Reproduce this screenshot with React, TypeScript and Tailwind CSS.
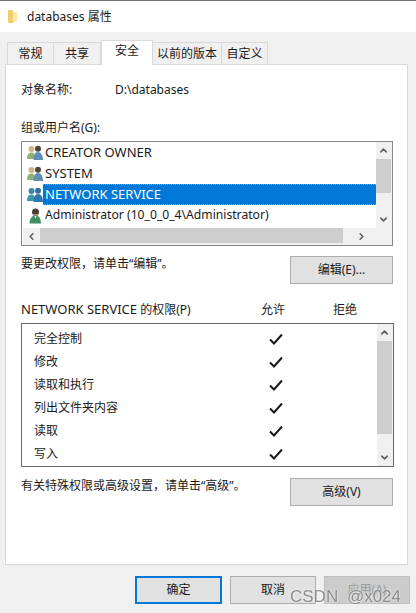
import { ChevronUp, ChevronDown, ChevronLeft, ChevronRight } from 'lucide-react';

const font = { fontFamily: '"Noto Sans", "Noto Sans CJK SC", sans-serif' };

function FolderIcon() {
  return (
    <svg width="16" height="16" viewBox="0 0 16 16">
      <path d="M1 1h4l1 1v12H2l-1-1z" fill="#f3cd6a" />
      <path d="M6 3h4v9l-4 2z" fill="#fbe7a6" />
    </svg>
  );
}

function UsersIcon({ tone }: { tone: 'group' | 'network' }) {
  const net = tone === 'network';
  return (
    <svg width="16" height="16" viewBox="0 0 16 16">
      <circle cx="4.500" cy="4" r="3" fill={net ? '#3f86a8' : '#cdb78a'} />
      <path d="M0 14c0-4 1.500-6.500 4.500-6.500S8 10 8 14z" fill={net ? '#3a9aa0' : '#8fb070'} />
      <circle cx="11" cy="3.800" r="3" fill={net ? '#2f6f9f' : '#4f4438'} />
      <path d="M6.500 15c0-5 1.500-8 4.500-8s5 3 5 8z" fill={net ? '#2f78ad' : '#5f8fb5'} />
    </svg>
  );
}

function UserIcon() {
  return (
    <svg width="16" height="16" viewBox="0 0 16 16">
      <circle cx="8.500" cy="4" r="3.500" fill="#4a4038" />
      <path d="M6 6h5v2H6z" fill="#b08a6a" />
      <path d="M2.500 15.500c0-5 2.500-8 6-8s5.500 3 5.500 8z" fill="#3f8f63" />
      <path d="M7.500 8h2l-1 3z" fill="#e6f0e6" />
    </svg>
  );
}

function Tab({ label, active, width }: { label: string; active?: boolean; width: string }) {
  if (active) {
    return (
      <div className={`${width} h-[25px] -mb-px z-10 flex items-center justify-center bg-white border border-b-0 border-[#d9d9d9] pb-1`}>
        {label}
      </div>
    );
  }
  return (
    <div className={`${width} h-[22px] flex items-center justify-center bg-[#f0f0f0] border border-b-0 border-l-0 first:border-l border-[#d9d9d9]`}>
      {label}
    </div>
  );
}

function Button({ label, className }: { label: string; className: string }) {
  return (
    <div className={`h-[28px] flex items-center justify-center ${className}`}>{label}</div>
  );
}

function VScroll({ thumb }: { thumb: string }) {
  return (
    <div className="w-[16px] shrink-0 flex flex-col bg-[#f0f0f0] text-[#606060]">
      <div className="h-[17px] pr-px flex items-center justify-center">
        <ChevronUp size={11} strokeWidth={3.5} />
      </div>
      <div className={`${thumb} w-[15px] bg-[#cdcdcd]`} />
      <div className="flex-1" />
      <div className="h-[17px] pr-px flex items-center justify-center">
        <ChevronDown size={11} strokeWidth={3.5} />
      </div>
    </div>
  );
}

const users = [
  { name: 'CREATOR OWNER', size: 'text-[13px]', icon: <UsersIcon tone="group" /> },
  { name: 'SYSTEM', size: 'text-[13px]', icon: <UsersIcon tone="group" /> },
  { name: 'NETWORK SERVICE', size: 'text-[13px]', icon: <UsersIcon tone="network" />, selected: true },
  { name: 'Administrator (10_0_0_4\\Administrator)', size: 'text-[12.15px]', icon: <UserIcon /> },
];

const perms = ['完全控制', '修改', '读取和执行', '列出文件夹内容', '读取', '写入'];

export default function App() {
  return (
    <div style={font} className="relative w-[416px] h-[613px] overflow-hidden bg-[#f0f0f0] text-[12px] text-[#1a1a1a] flex flex-col">
      <div className="h-[32px] shrink-0 bg-white border-t border-[#707070] flex items-center pl-[7px] gap-[4px]">
        <FolderIcon />
        <span>databases 属性</span>
      </div>

      <div className="flex items-end pl-[7px] h-[32px] shrink-0">
        <Tab label="常规" width="w-[47px]" />
        <Tab label="共享" width="w-[47px]" />
        <Tab label="安全" active width="w-[52px]" />
        <Tab label="以前的版本" width="w-[69px]" />
        <Tab label="自定义" width="w-[46px]" />
      </div>

      <div className="ml-[5px] w-[403px] h-[501px] shrink-0 bg-white border border-[#d9d9d9] pt-[15px] pl-[15px] flex flex-col">
        <div className="flex h-[20px] items-center">
          <span className="w-[94px]">对象名称:</span>
          <span>D:\databases</span>
        </div>

        <div className="mt-[18px] h-[20px] flex items-center">组或用户名(G):</div>
        <div className="mt-[3px] w-[372px] h-[105px] border border-[#828790] flex flex-col">
          <div className="flex h-[86px]">
            <div className="flex-1 min-w-0 pl-[5px] bg-white">
              {users.map((u) => (
                <div key={u.name} className="h-[21px] flex items-center">
                  <span className="w-[16px] shrink-0">{u.icon}</span>
                  <span
                    className={
                      u.selected
                        ? `pl-[2px] flex-1 h-[21px] flex items-center bg-[#0078d7] text-white border-y border-dotted border-[#f08a24] ${u.size}`
                        : `pl-[2px] whitespace-nowrap ${u.size}`
                    }
                  >
                    {u.name}
                  </span>
                </div>
              ))}
            </div>
            <VScroll thumb="h-[34px]" />
          </div>
          <div className="h-[17px] ml-[1px] flex bg-[#f0f0f0] text-[#606060]">
            <div className="w-[17px] flex items-center justify-center">
              <ChevronLeft size={11} strokeWidth={3.5} />
            </div>
            <div className="w-[303px] h-[15px] bg-[#cdcdcd]" />
            <div className="flex-1 flex items-center justify-center pr-[12px]">
              <ChevronRight size={11} strokeWidth={3.5} />
            </div>
          </div>
        </div>

        <div className="w-[372px] mt-[10px] flex justify-between items-start">
          <span className="mt-[-1px]">{'要更改权限\uFF0C请单击“编辑”。'}</span>
          <Button label="编辑(E)..." className="w-[103px] bg-[#e1e1e1] border border-[#adadad]" />
        </div>

        <div className="w-[372px] mt-[16px] h-[20px] flex items-center">
          <span className="w-[240px]">
            <span className="text-[13px]">NETWORK SERVICE</span> 的权限(P)
          </span>
          <span className="w-[72px]">允许</span>
          <span>拒绝</span>
        </div>
        <div className="mt-[3px] w-[373px] h-[144px] border border-[#696969] flex">
          <div className="flex-1 pt-[3px]">
            {perms.map((p) => (
              <div key={p} className="h-[23px] flex items-center pl-[12px]">
                <span className="w-[235px]">{p}</span>
                <svg width="14" height="12" viewBox="0 0 14 12">
                  <path d="M1 6.500l4 4L13 1.500" fill="none" stroke="#1a1a1a" strokeWidth="2" />
                </svg>
              </div>
            ))}
          </div>
          <VScroll thumb="h-[93px]" />
        </div>

        <div className="w-[372px] mt-[11px] flex justify-between items-start">
          <span className="mt-[-1px]">{'有关特殊权限或高级设置\uFF0C请单击“高级”。'}</span>
          <Button label="高级(V)" className="w-[103px] bg-[#e1e1e1] border border-[#adadad]" />
        </div>
      </div>

      <div className="flex pl-[135px] mt-[11px] gap-[8px]">
        <Button label="确定" className="w-[87px] bg-[#e1e1e1] border-2 border-[#0078d7]" />
        <Button label="取消" className="w-[86px] bg-[#e1e1e1] border border-[#adadad]" />
        <Button label="应用(A)" className="w-[86px] bg-[#cccccc] border border-[#bfbfbf] text-[#9a9a9a]" />
      </div>

      <span className="absolute left-[290px] top-[584px] text-[17px] [word-spacing:4px] text-[#8c8c8c] font-['Liberation_Sans'] drop-shadow-[0_0_1px_#ffffff]">
        CSDN @x024
      </span>
    </div>
  );
}
